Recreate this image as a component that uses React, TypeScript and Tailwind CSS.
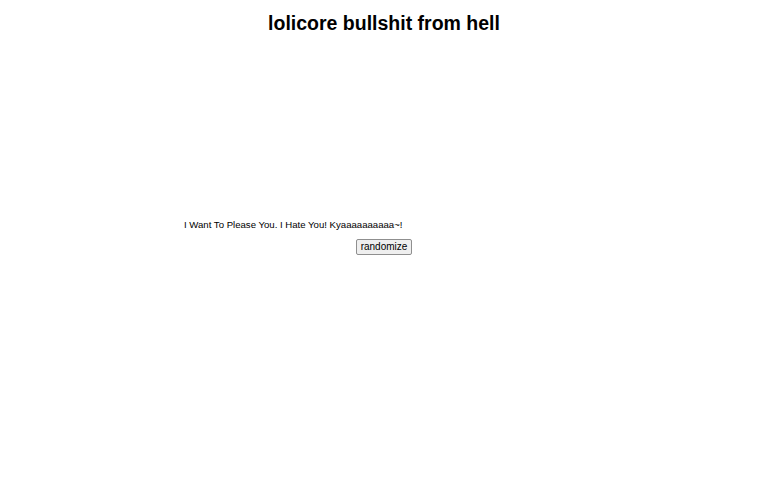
export default function App() {
  return (
    <div className="min-h-screen bg-white font-['Liberation_Sans',Arial,sans-serif] text-black">
      <h1 className="pt-[12px] text-center text-[19.5px] font-bold leading-[22px]">
        lolicore bullshit from hell
      </h1>

      {/* generator box */}
      <div className="mx-auto mt-[185px] w-[400px]">
        <p className="text-[9.6px] leading-[12px]">I Want To Please You. I Hate You! Kyaaaaaaaaaa~!</p>
        <div className="mt-[8px] flex justify-center">
          <button className="h-[16px] rounded-[2px] border border-[#8f8f8f] bg-[#efefef] px-[4px] text-[10px] leading-[14px]">
            randomize
          </button>
        </div>
      </div>
    </div>
  );
}
